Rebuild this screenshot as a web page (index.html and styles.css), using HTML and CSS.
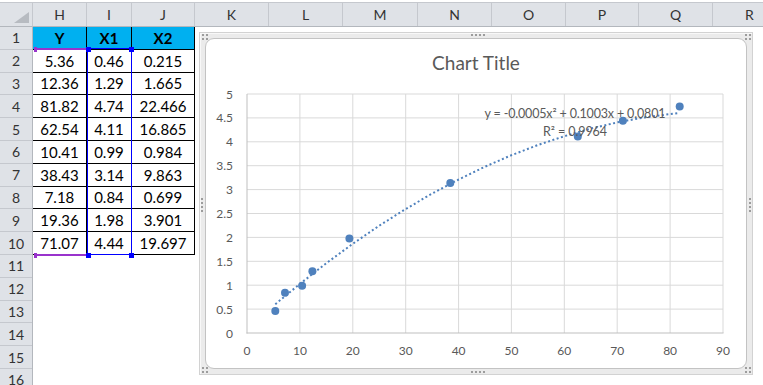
FILE: index.html
```html
<!DOCTYPE html>
<html lang="en">
<head>
    <meta charset="UTF-8">
    <meta name="viewport" content="width=device-width, initial-scale=1.0">
    <title>Scatter chart with trendline</title>
    <link rel="stylesheet" href="styles.css">
</head>
<body>
<div class="sheet">
    <div class="corner"></div>
    <div class="colheads">
        <div class="ch w54">H</div>
        <div class="ch w45">I</div>
        <div class="ch w63">J</div>
        <div class="ch w74">K</div>
        <div class="ch w74">L</div>
        <div class="ch w75">M</div>
        <div class="ch w74">N</div>
        <div class="ch w74">O</div>
        <div class="ch w73">P</div>
        <div class="ch w74">Q</div>
        <div class="ch w74">R</div>
    </div>
    <div class="rowheads">
        <div class="rh">1</div>
        <div class="rh">2</div>
        <div class="rh">3</div>
        <div class="rh">4</div>
        <div class="rh">5</div>
        <div class="rh">6</div>
        <div class="rh">7</div>
        <div class="rh">8</div>
        <div class="rh">9</div>
        <div class="rh">10</div>
        <div class="rh">11</div>
        <div class="rh">12</div>
        <div class="rh">13</div>
        <div class="rh">14</div>
        <div class="rh">15</div>
        <div class="rh">16</div>
    </div>
    <div class="cells">
        <div class="data">
            <div class="cell head">Y</div><div class="cell head">X1</div><div class="cell head">X2</div>
            <div class="cell">5.36</div><div class="cell">0.46</div><div class="cell">0.215</div>
            <div class="cell">12.36</div><div class="cell">1.29</div><div class="cell">1.665</div>
            <div class="cell">81.82</div><div class="cell">4.74</div><div class="cell">22.466</div>
            <div class="cell">62.54</div><div class="cell">4.11</div><div class="cell">16.865</div>
            <div class="cell">10.41</div><div class="cell">0.99</div><div class="cell">0.984</div>
            <div class="cell">38.43</div><div class="cell">3.14</div><div class="cell">9.863</div>
            <div class="cell">7.18</div><div class="cell">0.84</div><div class="cell">0.699</div>
            <div class="cell">19.36</div><div class="cell">1.98</div><div class="cell">3.901</div>
            <div class="cell">71.07</div><div class="cell">4.44</div><div class="cell">19.697</div>
        </div>

        <!-- chart source range highlights -->
        <div class="hl-x hl-x-top"></div>
        <div class="hl-x hl-x-bottom"></div>
        <div class="hl-y"></div>
        <div class="knob knob-p kp-top"></div>
        <div class="knob knob-p kp-bottom"></div>
        <div class="knob knob-b kb-tl"></div>
        <div class="knob knob-b kb-tr"></div>
        <div class="knob knob-b kb-bl"></div>
        <div class="knob knob-b kb-br"></div>

        <div class="chart">
            <span class="grip grip-h g-top"></span>
            <span class="grip grip-h g-bottom"></span>
            <span class="grip grip-v g-left"></span>
            <span class="grip grip-v g-right"></span>
            <span class="grip grip-c g-tl"></span>
            <span class="grip grip-c g-tr"></span>
            <span class="grip grip-c g-bl"></span>
            <span class="grip grip-c g-br"></span>
            <div class="chart-inner">
                <svg class="plot" width="540" height="329" viewBox="206 39 540 329">
                    <text class="title" x="476" y="70" text-anchor="middle">Chart Title</text>

                    <g class="gridlines">
                        <line x1="247" y1="94" x2="723" y2="94"/>
                        <line x1="247" y1="117.9" x2="723" y2="117.9"/>
                        <line x1="247" y1="141.8" x2="723" y2="141.8"/>
                        <line x1="247" y1="165.7" x2="723" y2="165.7"/>
                        <line x1="247" y1="189.6" x2="723" y2="189.6"/>
                        <line x1="247" y1="213.5" x2="723" y2="213.5"/>
                        <line x1="247" y1="237.4" x2="723" y2="237.4"/>
                        <line x1="247" y1="261.3" x2="723" y2="261.3"/>
                        <line x1="247" y1="285.2" x2="723" y2="285.2"/>
                        <line x1="247" y1="309.1" x2="723" y2="309.1"/>
                        <line x1="299.9" y1="94" x2="299.9" y2="333"/>
                        <line x1="352.8" y1="94" x2="352.8" y2="333"/>
                        <line x1="405.7" y1="94" x2="405.7" y2="333"/>
                        <line x1="458.6" y1="94" x2="458.6" y2="333"/>
                        <line x1="511.4" y1="94" x2="511.4" y2="333"/>
                        <line x1="564.3" y1="94" x2="564.3" y2="333"/>
                        <line x1="617.2" y1="94" x2="617.2" y2="333"/>
                        <line x1="670.1" y1="94" x2="670.1" y2="333"/>
                        <line x1="723" y1="94" x2="723" y2="333"/>
                    </g>
                    <g class="axes">
                        <line x1="247" y1="94" x2="247" y2="333.5"/>
                        <line x1="246.5" y1="333" x2="723.5" y2="333"/>
                    </g>

                    <g class="ylabels" text-anchor="end">
                        <text x="233" y="98.5">5</text>
                        <text x="233" y="122.4">4.5</text>
                        <text x="233" y="146.3">4</text>
                        <text x="233" y="170.2">3.5</text>
                        <text x="233" y="194.1">3</text>
                        <text x="233" y="218">2.5</text>
                        <text x="233" y="241.9">2</text>
                        <text x="233" y="265.8">1.5</text>
                        <text x="233" y="289.7">1</text>
                        <text x="233" y="313.6">0.5</text>
                        <text x="233" y="337.5">0</text>
                    </g>
                    <g class="xlabels" text-anchor="middle">
                        <text x="247" y="355">0</text>
                        <text x="299.9" y="355">10</text>
                        <text x="352.8" y="355">20</text>
                        <text x="405.7" y="355">30</text>
                        <text x="458.6" y="355">40</text>
                        <text x="511.4" y="355">50</text>
                        <text x="564.3" y="355">60</text>
                        <text x="617.2" y="355">70</text>
                        <text x="670.1" y="355">80</text>
                        <text x="723" y="355">90</text>
                    </g>

                    <polyline class="trend" points="275.3,304.2 299.9,283.9 326.3,263.2 352.8,243.8 379.2,225.7 405.7,209 432.1,193.6 458.6,179.5 485,166.7 511.4,155.2 537.9,145 564.3,136.2 590.8,128.6 617.2,122.4 643.7,117.5 679.7,112.9"/>

                    <g class="points">
                        <circle cx="275.3" cy="311" r="4"/>
                        <circle cx="312.4" cy="271.3" r="4"/>
                        <circle cx="679.7" cy="106.4" r="4"/>
                        <circle cx="577.8" cy="136.5" r="4"/>
                        <circle cx="302.1" cy="285.7" r="4"/>
                        <circle cx="450.3" cy="182.9" r="4"/>
                        <circle cx="285" cy="292.8" r="4"/>
                        <circle cx="349.4" cy="238.4" r="4"/>
                        <circle cx="622.9" cy="120.8" r="4"/>
                    </g>

                    <text class="eq" x="575" y="118" text-anchor="middle" textLength="181" lengthAdjust="spacing">y = -0.0005x² + 0.1003x + 0.0801</text>
                    <text class="eq" x="575" y="136" text-anchor="middle" textLength="64" lengthAdjust="spacing">R² = 0.9964</text>
                </svg>
            </div>
        </div>
    </div>
</div>
</body>
</html>
```

FILE: styles.css
```css
body {
    margin: 0;
    font-family: Lato, "Liberation Sans", sans-serif;
    background: #fff;
    overflow: hidden;
}
.sheet {
    width: 763px;
    height: 385px;
    display: grid;
    grid-template-columns: 33px 730px;
    grid-template-rows: 27px 358px;
    overflow: hidden;
}

/* headers */
.corner {
    position: relative;
    margin-top: 2px;
    background: #dfe2e7;
    border-top: 1px solid #c5c8ce;
    border-right: 1px solid #c5c8ce;
    border-bottom: 1px solid #b3b7bd;
}
.corner::after {
    content: "";
    position: absolute;
    right: 3px;
    bottom: 3px;
    width: 15px;
    height: 11px;
    background: #b7bbc1;
    clip-path: polygon(100% 0, 100% 100%, 0 100%);
}
.colheads {
    display: flex;
    margin-top: 2px;
    background: #dfe2e7;
    border-top: 1px solid #c5c8ce;
    border-bottom: 1px solid #b3b7bd;
}
.ch {
    flex: none;
    box-sizing: border-box;
    border-right: 1px solid #c5c8ce;
    display: flex;
    align-items: center;
    justify-content: center;
    font-size: 14px;
    color: #333;
}
.w45 { width: 45px; }
.w54 { width: 54px; }
.w63 { width: 63px; }
.w73 { width: 73px; }
.w74 { width: 74px; }
.w75 { width: 75px; }

.rowheads {
    background: #dfe2e7;
    border-right: 1px solid #b3b7bd;
}
.rh {
    height: 22.8px;
    box-sizing: border-box;
    border-bottom: 1px solid #c5c8ce;
    display: flex;
    align-items: center;
    justify-content: center;
    font-size: 14px;
    color: #333;
}

/* cells */
.cells {
    position: relative;
}
.data {
    display: grid;
    grid-template-columns: 54px 45px 63px;
    grid-auto-rows: 22.8px;
    width: 162px;
}
.cell {
    box-sizing: border-box;
    border-right: 1px solid #000;
    border-bottom: 1px solid #000;
    display: flex;
    align-items: center;
    justify-content: center;
    font-size: 15px;
    color: #000;
}
.cell.head {
    background: #00b0f0;
    font-weight: bold;
}

/* source range highlight */
.hl-x {
    position: absolute;
    left: 1px;
    width: 53px;
    height: 2px;
    background: #9933cc;
}
.hl-x-top { top: 21px; }
.hl-x-bottom { top: 227px; }
.hl-y {
    position: absolute;
    left: 54px;
    top: 21px;
    width: 45px;
    height: 207px;
    box-sizing: border-box;
    border: 1px solid #0000ff;
}
.knob {
    position: absolute;
    width: 5px;
    height: 5px;
}
.knob-p { background: #9933cc; width: 3px; left: 1px; }
.knob-b { background: #0000ff; }
.kp-top { top: 20px; }
.kp-bottom { top: 226px; }
.kb-tl { left: 53px; top: 20px; }
.kb-tr { left: 96px; top: 20px; }
.kb-bl { left: 53px; top: 226px; }
.kb-br { left: 96px; top: 226px; }

/* chart */
.chart {
    position: absolute;
    left: 166px;
    top: 5px;
    width: 554px;
    height: 343px;
    box-sizing: border-box;
    padding: 5px;
    background: #ebebeb;
    border: 1px solid #d2d2d2;
    box-shadow: inset 1px 1px 0 #f8f8f8;
}
.chart-inner {
    height: 100%;
    box-sizing: border-box;
    background: #fff;
    border: 1px solid #c3c3c3;
    border-radius: 9px;
    overflow: hidden;
}
.plot {
    display: block;
    font-family: Lato, "Liberation Sans", sans-serif;
}
.grip {
    position: absolute;
    background-image: radial-gradient(circle, #9c9c9c 0.9px, transparent 1.3px);
    background-size: 4px 4px;
}
.grip-h { width: 16px; height: 4px; left: 270px; }
.grip-v { width: 4px; height: 16px; top: 164px; }
.grip-c { width: 8px; height: 8px; }
.g-top { top: 0; }
.g-bottom { bottom: 0; }
.g-left { left: 0; }
.g-right { right: 0; }
.g-tl { left: 1px; top: 0; }
.g-tr { right: 0; top: 0; }
.g-bl { left: 1px; bottom: 0; }
.g-br { right: 0; bottom: 0; }

.title {
    font-size: 19px;
    fill: #595959;
}
.gridlines line {
    stroke: #d9d9d9;
    stroke-width: 1;
}
.axes line {
    stroke: #bfbfbf;
    stroke-width: 1;
}
.ylabels, .xlabels {
    font-size: 12px;
    fill: #595959;
}
.trend {
    fill: none;
    stroke: #4f81bd;
    stroke-width: 2;
    stroke-dasharray: 2 2.5;
}
.points circle {
    fill: #4f81bd;
}
.eq {
    font-size: 12.5px;
    fill: #595959;
}
```
